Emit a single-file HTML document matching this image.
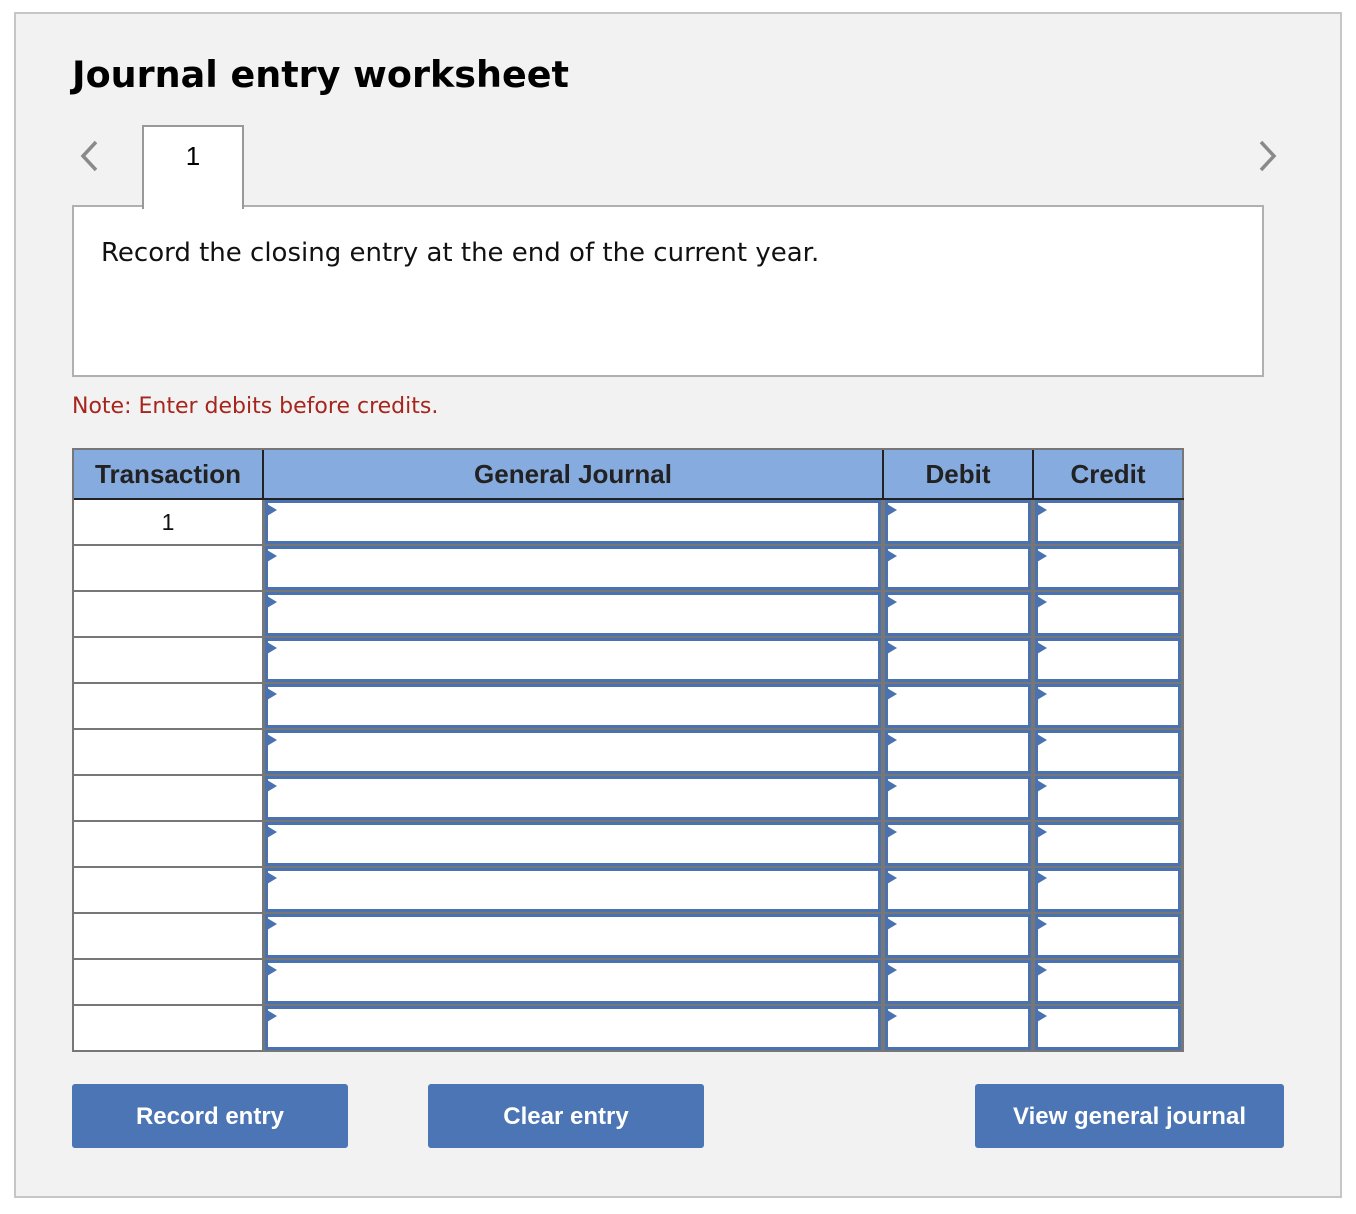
<!DOCTYPE html>
<html><head><meta charset="utf-8"><style>
*{box-sizing:border-box;margin:0;padding:0}
body{width:1356px;height:1214px;background:#fff;position:relative;overflow:hidden;font-family:"Liberation Sans",Arial,sans-serif}
.panel{position:absolute;left:14px;top:12px;width:1328px;height:1186px;background:#f2f2f2;border:2px solid #c6c6c6}
.title{position:absolute;left:72px;top:53px;font-family:"DejaVu Sans",Verdana,sans-serif;font-weight:bold;font-size:36.5px;color:#000;white-space:nowrap}
.tab{position:absolute;left:142px;top:125px;width:102px;height:84px;background:#fff;border:2px solid #999;border-bottom:none;z-index:2;text-align:center;font-size:26px;padding-top:14px;color:#000}
.box{position:absolute;left:72px;top:205px;width:1192px;height:172px;background:#fff;border:2px solid #b0b0b0}
.box p{position:absolute;left:27px;top:31px;font-family:"DejaVu Sans",Verdana,sans-serif;font-size:26px;color:#111;white-space:nowrap}
.arr{position:absolute;top:140px}
.note{position:absolute;left:72px;top:394px;font-family:"DejaVu Sans",Verdana,sans-serif;font-size:22px;color:#a6251c;white-space:nowrap}
.grid{position:absolute;left:72px;top:448px;width:1112px;height:604px;background:#777;display:grid;grid-template-columns:188px 618px 148px 148px;grid-template-rows:48px repeat(12,44px);gap:2px;padding:2px}
.h{background:#86abdf;font-weight:bold;font-size:26px;color:#222;text-align:center;line-height:48px;position:relative}
.h+.h:before{content:"";position:absolute;left:-2px;top:0;width:2px;height:50px;background:#222}
.h:after{content:"";position:absolute;left:0;right:-2px;bottom:-2px;height:2px;background:#222}
.t{background:#fff;text-align:center;font-size:23px;line-height:44px;color:#111}
.i{background:#fff;border:3px solid #4a72b0;position:relative;margin:0 1px}
.i:before{content:"";position:absolute;left:-1px;top:1px;border-left:10px solid #4a72b0;border-top:6px solid transparent;border-bottom:6px solid transparent}
.btn{position:absolute;top:1084px;height:64px;background:#4b75b4;border-radius:3px;color:#fff;font-weight:bold;font-size:24px;text-align:center;line-height:66px}
</style></head><body>
<div class="panel"></div>
<div class="title">Journal entry worksheet</div>
<svg class="arr" style="left:78px" width="22" height="32" viewBox="0 0 22 32"><path d="M18 2 L5 16 L18 30" stroke="#8a8a8a" stroke-width="3.5" fill="none"/></svg>
<svg class="arr" style="left:1257px" width="22" height="32" viewBox="0 0 22 32"><path d="M4 2 L17 16 L4 30" stroke="#8a8a8a" stroke-width="3.5" fill="none"/></svg>
<div class="tab">1</div>
<div class="box"><p>Record the closing entry at the end of the current year.</p></div>
<div class="note">Note: Enter debits before credits.</div>
<div class="grid">
<div class="h">Transaction</div><div class="h">General Journal</div><div class="h">Debit</div><div class="h">Credit</div>
<div class="t">1</div><div class="i"></div><div class="i"></div><div class="i"></div>
<div class="t"></div><div class="i"></div><div class="i"></div><div class="i"></div>
<div class="t"></div><div class="i"></div><div class="i"></div><div class="i"></div>
<div class="t"></div><div class="i"></div><div class="i"></div><div class="i"></div>
<div class="t"></div><div class="i"></div><div class="i"></div><div class="i"></div>
<div class="t"></div><div class="i"></div><div class="i"></div><div class="i"></div>
<div class="t"></div><div class="i"></div><div class="i"></div><div class="i"></div>
<div class="t"></div><div class="i"></div><div class="i"></div><div class="i"></div>
<div class="t"></div><div class="i"></div><div class="i"></div><div class="i"></div>
<div class="t"></div><div class="i"></div><div class="i"></div><div class="i"></div>
<div class="t"></div><div class="i"></div><div class="i"></div><div class="i"></div>
<div class="t"></div><div class="i"></div><div class="i"></div><div class="i"></div>
</div>
<div class="btn" style="left:72px;width:276px">Record entry</div>
<div class="btn" style="left:428px;width:276px">Clear entry</div>
<div class="btn" style="left:975px;width:309px">View general journal</div>
</body></html>
